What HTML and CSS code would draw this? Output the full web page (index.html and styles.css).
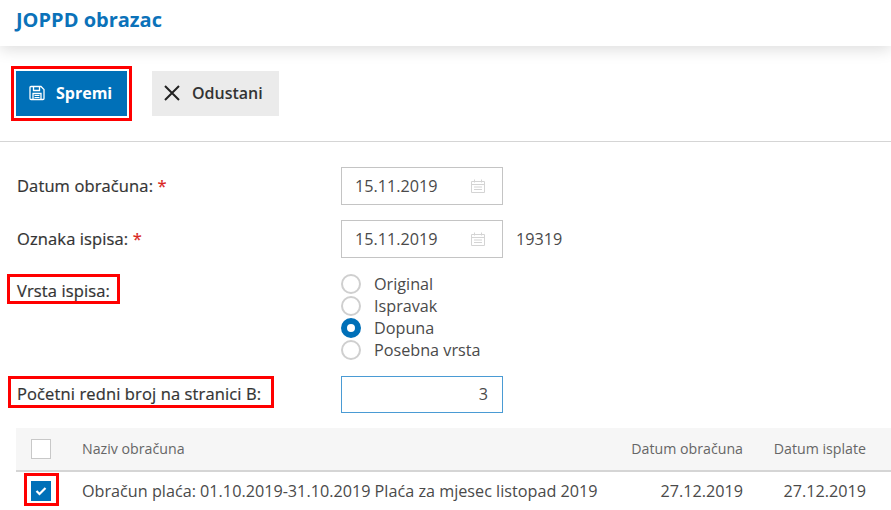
FILE: index.html
```html
<!DOCTYPE html>
<html lang="hr">
<head>
    <meta charset="UTF-8">
    <meta name="viewport" content="width=device-width, initial-scale=1.0">
    <title>JOPPD obrazac</title>
    <link rel="stylesheet" href="styles.css">
</head>
<body>
    <header class="page-header">
        <h1>JOPPD obrazac</h1>
    </header>

    <div class="toolbar">
        <button class="btn btn-primary marked-btn">
            <svg class="btn-icon" viewBox="0 0 16 16" width="16" height="16" fill="none" stroke="#fff" stroke-width="1.3">
                <path d="M1 2.5 A1 1 0 0 1 2 1.5 H12 L15 4.5 V13.5 A1 1 0 0 1 14 14.5 H2 A1 1 0 0 1 1 13.5 Z"/>
                <path d="M4.5 1.5 V5.5 H10.5 V1.5"/>
                <path d="M4 14.5 V8.5 H12 V14.5"/>
                <path d="M5.5 10.5 H10.5 M5.5 12.5 H10.5" stroke-width="1"/>
            </svg>
            Spremi
        </button>
        <button class="btn btn-cancel">
            <svg class="btn-icon" viewBox="0 0 18 18" width="18" height="18" fill="none" stroke="#222" stroke-width="2">
                <path d="M2 2 L16 16 M16 2 L2 16"/>
            </svg>
            Odustani
        </button>
    </div>

    <form class="form">
        <div class="form-row row-date-first">
            <label class="form-label">Datum obračuna: <span class="req">*</span></label>
            <div class="date-input">
                <span>15.11.2019</span>
                <svg class="cal-icon" viewBox="0 0 14 14" width="14" height="14" fill="none" stroke="#d4d4d4" stroke-width="1">
                    <path d="M0.5 2.5 H13.5 V13.5 H0.5 Z M0.5 5.5 H13.5 M3.5 0.5 V3.5 M10.5 0.5 V3.5 M3 8 H11 M3 10.5 H11"/>
                </svg>
            </div>
        </div>

        <div class="form-row row-date-second">
            <label class="form-label">Oznaka ispisa: <span class="req">*</span></label>
            <div class="date-input">
                <span>15.11.2019</span>
                <svg class="cal-icon" viewBox="0 0 14 14" width="14" height="14" fill="none" stroke="#d4d4d4" stroke-width="1">
                    <path d="M0.5 2.5 H13.5 V13.5 H0.5 Z M0.5 5.5 H13.5 M3.5 0.5 V3.5 M10.5 0.5 V3.5 M3 8 H11 M3 10.5 H11"/>
                </svg>
            </div>
            <span class="extra">19319</span>
        </div>

        <div class="form-row row-radios">
            <label class="form-label marked">Vrsta ispisa:</label>
            <div class="radio-group">
                <div class="radio-item"><span class="radio"></span>Original</div>
                <div class="radio-item"><span class="radio"></span>Ispravak</div>
                <div class="radio-item"><span class="radio checked"></span>Dopuna</div>
                <div class="radio-item"><span class="radio"></span>Posebna vrsta</div>
            </div>
        </div>

        <div class="form-row row-number">
            <label class="form-label marked">Početni redni broj na stranici B:</label>
            <div class="number-input">3</div>
        </div>
    </form>

    <div class="table">
        <div class="table-row table-head">
            <div class="col-check"><span class="checkbox"></span></div>
            <div class="col-name">Naziv obračuna</div>
            <div class="col-date">Datum obračuna</div>
            <div class="col-pay">Datum isplate</div>
        </div>
        <div class="table-row table-body">
            <div class="col-check">
                <span class="checkbox checked">
                    <svg viewBox="0 0 12 10" width="12" height="10" fill="none" stroke="#fff" stroke-width="2.2">
                        <path d="M1.5 5 L4.5 8 L10.5 2"/>
                    </svg>
                </span>
            </div>
            <div class="col-name">Obračun plaća: 01.10.2019-31.10.2019 Plaća za mjesec listopad 2019</div>
            <div class="col-date">27.12.2019</div>
            <div class="col-pay">27.12.2019</div>
        </div>
    </div>
</body>
</html>
```

FILE: styles.css
```css
* {
    margin: 0;
    padding: 0;
    box-sizing: border-box;
}

body {
    font-family: 'Open Sans', 'Liberation Sans', sans-serif;
    background: white;
    color: #3c3c3c;
    font-size: 16.2px;
    width: 891px;
    height: 510px;
    overflow: hidden;
}

.page-header {
    height: 46px;
    padding: 8px 16px 0;
    background: white;
    box-shadow: 0 4px 14px rgba(0, 0, 0, 0.13);
}

.page-header h1 {
    color: #0b72b9;
    font-size: 20px;
    line-height: 24px;
    font-weight: 700;
}

.toolbar {
    display: flex;
    gap: 25px;
    height: 96px;
    padding: 25px 16px 0;
    border-bottom: 1px solid #d5d5d5;
}

.btn {
    display: flex;
    align-items: center;
    height: 45px;
    padding-bottom: 2px;
    border: none;
    font-family: inherit;
    font-size: 16px;
}

.btn-primary {
    width: 111px;
    padding-left: 13px;
    gap: 11px;
    background: #0070b8;
    color: white;
    font-weight: 700;
}

.marked-btn {
    outline: 3px solid #f00;
    outline-offset: 2px;
}

.btn-cancel {
    width: 127px;
    padding-left: 11px;
    gap: 11px;
    background: #ebebeb;
    color: #333;
    font-weight: 600;
}

.form {
    padding: 0 0 0 17px;
}

.form-row {
    display: flex;
    align-items: flex-start;
}

.form-label {
    width: 324px;
    line-height: 20px;
    font-size: 16.5px;
    letter-spacing: 0.12px;
    color: #333;
    -webkit-text-stroke: 0.2px #333;
    flex-shrink: 0;
}

.req {
    color: #d9251c;
    -webkit-text-stroke: 0.2px #d9251c;
}

.row-date-first {
    margin-top: 25px;
    height: 53px;
}

.row-date-second {
    height: 54px;
}

.row-date-first .form-label,
.row-date-second .form-label {
    padding-top: 9px;
}

.date-input {
    display: flex;
    align-items: center;
    justify-content: space-between;
    width: 162px;
    height: 38px;
    padding: 0 17px 0 13px;
    border: 1px solid #c4c4c4;
    color: #4a4a4a;
}

.extra {
    margin: 9px 0 0 13px;
    line-height: 20px;
    color: #4a4a4a;
}

.row-radios {
    height: 102px;
}

.form-label.marked {
    outline: 3px solid #f00;
    outline-offset: 0;
}

.row-radios .form-label {
    margin: 3px 0 0 -7px;
    padding: 4px 0 0 7px;
    width: 107px;
    height: 24px;
}

.radio-group {
    margin: -1px 0 0 224px;
    display: flex;
    flex-direction: column;
}

.radio-item {
    display: flex;
    align-items: center;
    gap: 13px;
    height: 22px;
    color: #4a4a4a;
}

.radio {
    width: 20px;
    height: 20px;
    border: 2px solid #cfcfcf;
    border-radius: 50%;
    background: white;
}

.radio.checked {
    border: 6px solid #0070b8;
}

.row-number {
    height: 52px;
}

.row-number .form-label {
    margin: 3px 0 0 -6px;
    padding: 5px 0 0 6px;
    width: 260px;
    height: 26px;
}

.number-input {
    margin-left: 70px;
    width: 162px;
    height: 37px;
    padding-right: 14px;
    border: 1px solid #4a9bd4;
    text-align: right;
    line-height: 35px;
    color: #4a4a4a;
}

.table {
    margin-left: 16px;
}

.table-row {
    display: flex;
    align-items: center;
}

.table-head {
    height: 44px;
    padding-bottom: 1px;
    background: #f6f6f6;
    border-bottom: 2px solid #d5d5d5;
    font-size: 14.2px;
    color: #666;
}

.table-body {
    height: 38px;
    color: #4a4a4a;
}

.col-check {
    width: 66px;
    padding-left: 15px;
    display: flex;
}

.col-name {
    flex: 1;
    white-space: nowrap;
}

.col-date {
    width: 120px;
    text-align: right;
}

.col-pay {
    width: 148px;
    padding-right: 25px;
    text-align: right;
}

.checkbox {
    position: relative;
    display: flex;
    align-items: center;
    justify-content: center;
    width: 20px;
    height: 20px;
    border: 1px solid #c8c8c8;
    background: white;
}

.checkbox.checked {
    border: none;
    background: #0070b8;
}

.checkbox.checked::after {
    content: '';
    position: absolute;
    top: -8px;
    right: -8px;
    bottom: -5px;
    left: -7px;
    border: 3px solid #f00;
}
```
